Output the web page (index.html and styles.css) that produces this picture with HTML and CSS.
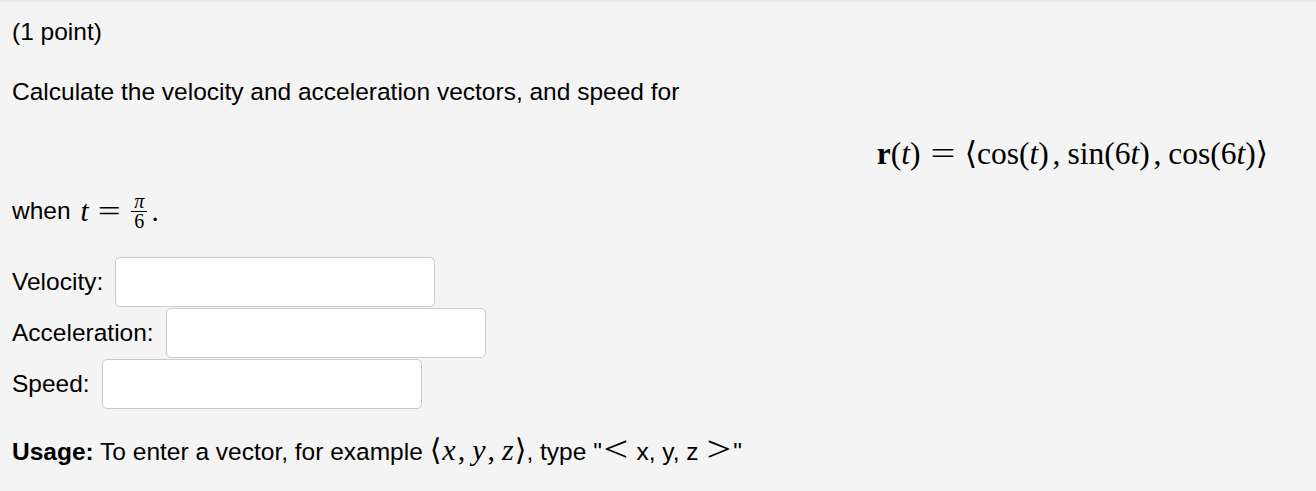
FILE: index.html
```html
<!DOCTYPE html>
<html>
<head>
<meta charset="utf-8">
<link rel="stylesheet" href="styles.css">
</head>
<body>
<div class="problem">
  <p class="points">(1 point)</p>
  <p class="intro">Calculate the velocity and acceleration vectors, and speed for</p>
  <div class="display">
    <span class="math big"><b class="bf">r</b>(<i>t</i>)<span class="rel">=</span>⟨cos(<i>t</i>)<span class="cm">,</span>sin(6<i>t</i>)<span class="cm">,</span>cos(6<i>t</i>)⟩</span>
  </div>
  <p class="when">when <span class="math"><i class="tv">t</i><span class="rel">=</span><span class="frac"><span class="num"><i>π</i></span><span class="den">6</span></span>.</span></p>
  <div class="answers">
    <label class="row">Velocity: <input class="ans" type="text"></label>
    <label class="row">Acceleration: <input class="ans" type="text"></label>
    <label class="row">Speed: <input class="ans" type="text"></label>
  </div>
  <p class="usage"><b>Usage:</b> To enter a vector, for example <span class="math vec">⟨<i>x</i><span class="mc">,</span><i>y</i><span class="mc">,</span><i>z</i>⟩</span>, type "<span class="math op">&lt;</span> x, y, z <span class="math op">&gt;</span>"</p>
</div>
</body>
</html>
```

FILE: styles.css
```css
html, body {
  margin: 0;
  padding: 0;
  background: #f4f4f4;
}
.problem {
  border-top: 2px solid #e9e9e9;
  background: #f4f4f4;
  height: 489px;
  box-sizing: border-box;
  padding: 0 12px;
  font-family: "Liberation Sans", Arial, sans-serif;
  font-size: 24.5px;
  line-height: 28px;
  color: #000;
}
p { margin: 0; }
.points { padding-top: 16px; }
.intro { margin-top: 32px; }
.display {
  display: flex;
  justify-content: flex-end;
  padding-right: 36px;
  margin-top: 28px;
  height: 40px;
  align-items: center;
}
.math {
  font-family: "Liberation Serif", "DejaVu Serif", serif;
  white-space: nowrap;
}
.math i { font-style: italic; }
.big { font-size: 31.5px; }
.bf { font-weight: bold; }
.rel {
  display: inline-block;
  transform: scaleX(1.4);
  margin: 0 0.42em;
}
.cm { margin: 0 0.22em 0 0.12em; }
.when {
  margin-top: 17px;
  height: 40px;
  display: flex;
  align-items: center;
  gap: 8px;
}
.when .math { font-size: 29px; display: inline-flex; align-items: center; }
.tv { margin-left: 2px; }
.frac {
  display: inline-flex;
  flex-direction: column;
  align-items: center;
  font-size: 20px;
  line-height: 19px;
  margin: 0 4px 0 2px;
}
.frac .num {
  border-bottom: 1px solid #000;
  padding: 0 3px;
}
.answers {
  margin-top: 26px;
  display: flex;
  flex-direction: column;
  gap: 1px;
}
.row {
  display: flex;
  align-items: center;
  height: 50px;
}
.ans {
  margin-left: 12px;
  width: 320px;
  height: 50px;
  box-sizing: border-box;
  border: 1px solid #cccccc;
  border-radius: 5px;
  background: #fff;
  padding: 4px 6px;
  font-size: 18px;
  font-family: "Liberation Sans", Arial, sans-serif;
}
.usage {
  margin-top: 29px;
}
.vec { font-size: 30px; line-height: 0; }
.vec i { margin: 0 1px; }
.mc { margin: 0 6px 0 1px; }
.op {
  display: inline-block;
  font-size: 35px;
  line-height: 0;
  vertical-align: -1px;
  transform: scaleX(1.25);
  margin: 0 4px;
}
```
